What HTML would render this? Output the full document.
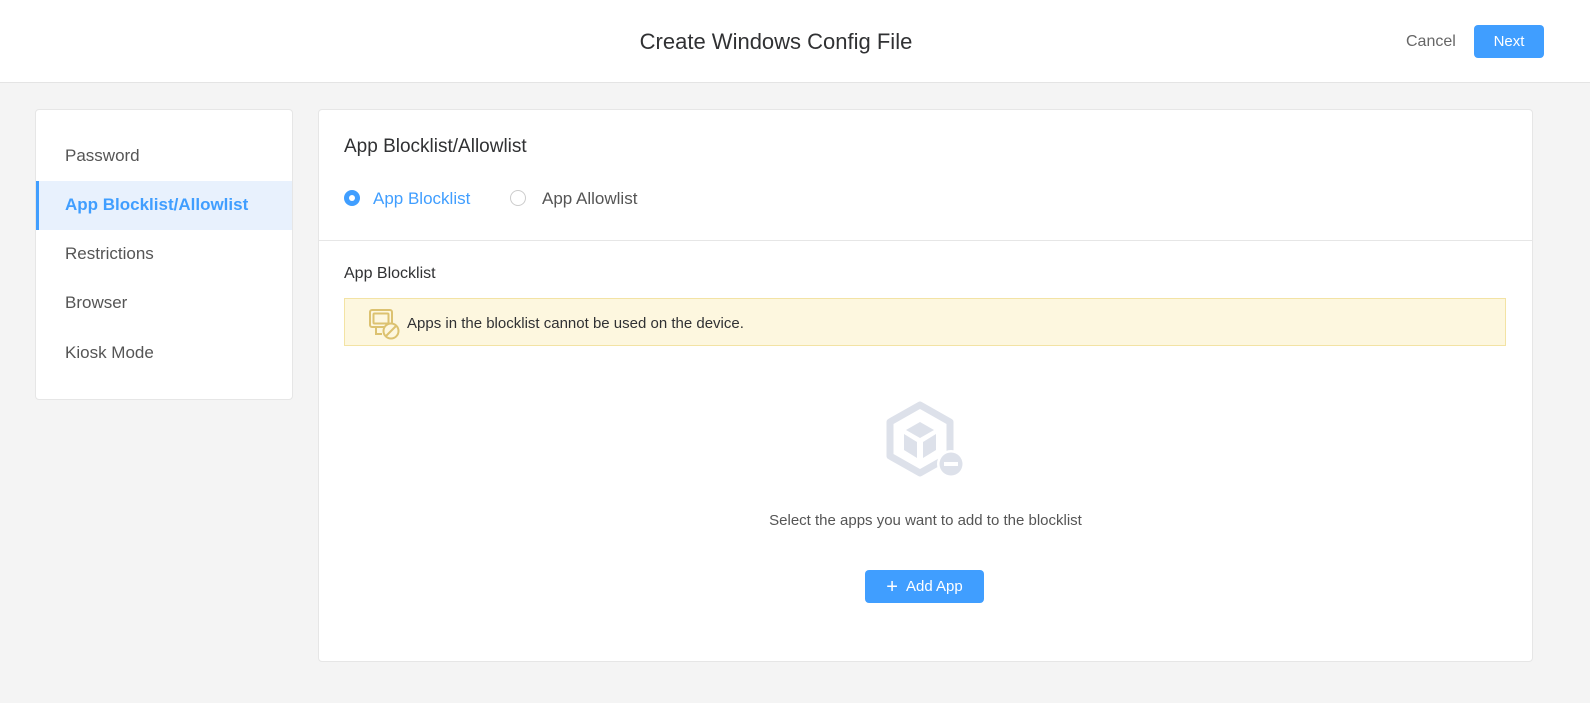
<!DOCTYPE html>
<html><head><style>
body{margin:0;width:1590px;height:703px;background:#f4f4f4;font-family:"Liberation Sans",sans-serif;position:relative;overflow:hidden}
.hdr{position:absolute;left:0;top:0;width:1590px;height:82px;background:#fff;border-bottom:1px solid #e4e4e4}
.title{position:absolute;left:0;width:1552px;text-align:center;top:29px;font-size:22px;color:#303133}
.cancel{position:absolute;left:1406px;top:33px;font-size:16px;color:#666}
.next{position:absolute;left:1474px;top:25px;width:70px;height:33px;background:#409eff;border-radius:4px;color:#fff;font-size:15px;text-align:center;line-height:33px}
.side{position:absolute;left:35px;top:109px;width:256px;height:289px;background:#fff;border:1px solid #e6e6e6;border-radius:4px}
.it{position:absolute;left:29px;font-size:17px;color:#555}
.act{position:absolute;left:0;top:71px;width:256px;height:49px;background:#e8f1fd;border-left:3px solid #409eff;box-sizing:border-box}
.main{position:absolute;left:318px;top:109px;width:1213px;height:551px;background:#fff;border:1px solid #e6e6e6;border-radius:4px}
.t{position:absolute;font-size:17px;color:#303133}
.warn{position:absolute;left:25px;top:188px;width:1162px;height:48px;background:#fdf7df;border:1px solid #f3e3a4;box-sizing:border-box}
.btn{position:absolute;left:546px;top:460px;width:119px;height:33px;background:#409eff;border-radius:4px;color:#fff;font-size:15px;text-align:center;line-height:33px}
</style></head><body>
<div class="hdr"><div class="title">Create Windows Config File</div><div class="cancel">Cancel</div><div class="next">Next</div></div>
<div class="side">
<div class="it" style="top:36px">Password</div>
<div class="act"></div>
<div class="it" style="top:85px;color:#409eff;font-weight:bold">App Blocklist/Allowlist</div>
<div class="it" style="top:134px">Restrictions</div>
<div class="it" style="top:183px">Browser</div>
<div class="it" style="top:233px">Kiosk Mode</div>
</div>
<div class="main">
<div class="t" style="left:25px;top:26px;font-size:19px">App Blocklist/Allowlist</div>
<div style="position:absolute;left:25px;top:80px;width:16px;height:16px;border-radius:50%;background:#409eff"><div style="position:absolute;left:5px;top:5px;width:6px;height:6px;border-radius:50%;background:#fff"></div></div>
<div class="t" style="left:54px;top:79px;color:#409eff">App Blocklist</div>
<div style="position:absolute;left:191px;top:80px;width:14px;height:14px;border-radius:50%;border:1px solid #ccc"></div>
<div class="t" style="left:223px;top:79px;color:#555">App Allowlist</div>
<div style="position:absolute;left:0;top:130px;width:1213px;height:1px;background:#e6e6e6"></div>
<div class="t" style="left:25px;top:155px;font-size:16px">App Blocklist</div>
<div class="warn">
<svg style="position:absolute;left:23px;top:9px" width="34" height="32" viewBox="0 0 34 32" fill="none" stroke="#dcc270" stroke-width="2"><rect x="2" y="2" width="22" height="17" rx="2"/><rect x="5.5" y="5.5" width="15" height="10" rx="1"/><path d="M8 19v7h6"/><circle cx="23" cy="23" r="7.5" fill="#fdf7df"/><path d="M18 28l10-10"/></svg>
<div style="position:absolute;left:62px;top:16px;font-size:15px;color:#303133">Apps in the blocklist cannot be used on the device.</div>
</div>
<svg style="position:absolute;left:560px;top:290px" width="90" height="80" viewBox="0 0 90 80"><path d="M41 5 L71 22 L71 56 L41 73 L11 56 L11 22Z" fill="none" stroke="#dde1ea" stroke-width="7" stroke-linejoin="round"/><path d="M41 22 L55 30 L41 38 L27 30Z" fill="#dde1ea"/><path d="M25 34 L38 42 L38 58 L25 50Z" fill="#dde1ea"/><path d="M57 34 L44 42 L44 58 L57 50Z" fill="#dde1ea"/><circle cx="72" cy="64" r="14" fill="#fff"/><circle cx="72" cy="64" r="11.5" fill="#dde1ea"/><rect x="65" y="62" width="14" height="4" fill="#fff"/></svg>
<div style="position:absolute;left:0;width:1213px;text-align:center;top:402px;font-size:15px;color:#555">Select the apps you want to add to the blocklist</div>
<div class="btn"><span style="font-size:20px;vertical-align:-2px;margin-right:8px">+</span>Add App</div>
</div>
</body></html>
